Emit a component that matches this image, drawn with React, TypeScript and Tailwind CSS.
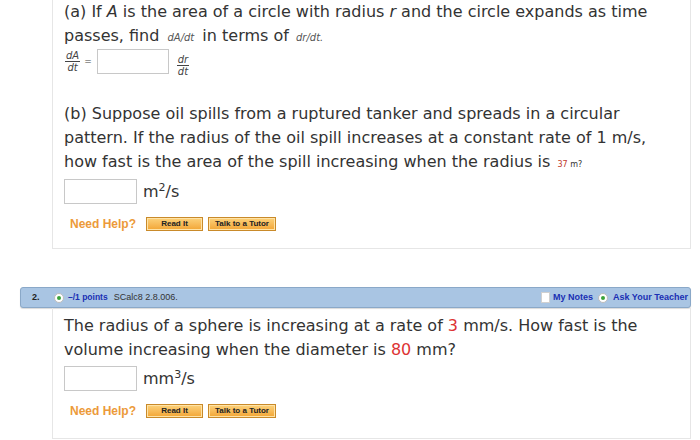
const body = "font-['DejaVu_Sans',Verdana,sans-serif] text-[16px] leading-[24px] text-[#333]";

const Btn = ({ label, w }: { label: string; w: string }) => (
  <span
    className={`${w} h-[14px] flex items-center justify-center border border-[#c98a2a] bg-gradient-to-b from-[#fcd27a] to-[#f2a531] font-['Liberation_Sans',Arial,sans-serif] text-[8px] font-bold text-[#222] shadow-[inset_0_0_0_1px_#ffe3a6]`}
  >
    {label}
  </span>
);

const HelpRow = () => (
  <div className="flex items-center ml-[6px]">
    <span className="font-['Liberation_Sans',Arial,sans-serif] text-[12px] font-bold text-[#ec9a3a] mr-[10px]">Need Help?</span>
    <Btn label="Read It" w="w-[57px]" />
    <span className="w-[5px]" />
    <Btn label="Talk to a Tutor" w="w-[68px]" />
  </div>
);

const AnswerBox = ({ w = "w-[73px]" }: { w?: string }) => (
  <span className={`${w} h-[25px] inline-block border border-[#c8c8c8] bg-white`} />
);

const Frac = ({ top, bottom }: { top: string; bottom: string }) => (
  <span className="inline-flex flex-col items-center font-['DejaVu_Sans',sans-serif] italic text-[10px] leading-[11px] text-[#444]">
    <span className="border-b border-[#444] px-[1px]">{top}</span>
    <span>{bottom}</span>
  </span>
);

const Dot = () => (
  <span className="w-[10px] h-[10px] rounded-full bg-white border border-[#bcbcbc] flex items-center justify-center">
    <span className="w-[4px] h-[4px] rounded-full bg-[#3aa33a]" />
  </span>
);

export default function App() {
  return (
    <div className="w-[700px] h-[440px] bg-white overflow-hidden">
      <div className={`ml-[52px] w-[639px] border-l border-r border-b border-[#e6e6e6] pl-[11px] pb-[12px] ${body}`}>
        <p>
          (a) If <i>A</i> is the area of a circle with radius <i>r</i> and the circle expands as time
        </p>
        <p>
          passes, find <span className="italic text-[10px] text-[#555] mx-[3px]">dA/dt</span> in terms of{" "}
          <span className="italic text-[10px] text-[#555] ml-[2px]">dr/dt.</span>
        </p>
        <div className="flex items-center -mt-[2px] ml-[1px] h-[26px]">
          <Frac top="dA" bottom="dt" />
          <span className="text-[9px] text-[#444] mx-[4px]">=</span>
          <span className="w-[72px] h-[25px] border border-[#c8c8c8] ml-[1px]" />
          <span className="ml-[8px]">
            <Frac top="dr" bottom="dt" />
          </span>
        </div>
        <div className="h-[28px]" />
        <p>(b) Suppose oil spills from a ruptured tanker and spreads in a circular</p>
        <p>pattern. If the radius of the oil spill increases at a constant rate of 1 m/s,</p>
        <p>
          how fast is the area of the spill increasing when the radius is{" "}
          <span className="text-[8px] ml-[2px]">
            <span className="text-[#c0392b]">37</span> m?
          </span>
        </p>
        <div className="flex items-center mt-[2px] gap-[6px]">
          <AnswerBox />
          <span>
            m<sup className="text-[11px] leading-none">2</sup>/s
          </span>
        </div>
        <div className="mt-[8px]">
          <HelpRow />
        </div>
      </div>

      <div className="h-[38px]" />

      <div className="ml-[20px] w-[671px] h-[21px] rounded-[3px] border border-[#8aa8c8] bg-[#a9c5e3] flex items-center font-['Liberation_Sans',Arial,sans-serif] text-[9px] shadow-[0_1px_1px_rgba(0,0,0,0.15)]">
        <span className="font-bold text-[#222] ml-[11px] w-[22px]">2.</span>
        <Dot />
        <span className="font-bold text-[#1a2fb3] ml-[4px] text-[8.5px]">–/1 points</span>
        <span className="text-[#333] ml-[6px]">SCalc8 2.8.006.</span>
        <span className="flex-1" />
        <span className="w-[9px] h-[11px] bg-white border border-[#d0d0d0] mr-[3px]" />
        <span className="font-bold text-[#1a2fb3]">My Notes</span>
        <span className="ml-[5px] mr-[5px]">
          <Dot />
        </span>
        <span className="font-bold text-[#1a2fb3] mr-[2px]">Ask Your Teacher</span>
      </div>

      <div className={`ml-[52px] w-[639px] border-l border-r border-b border-[#e6e6e6] pl-[11px] pt-[6px] pb-[15px] ${body}`}>
        <p>
          The radius of a sphere is increasing at a rate of <span className="text-[#d33]">3</span> mm/s. How fast is the
        </p>
        <p>
          volume increasing when the diameter is <span className="text-[#d33]">80</span> mm?
        </p>
        <div className="flex items-center mt-[4px] gap-[6px]">
          <AnswerBox />
          <span>
            mm<sup className="text-[11px] leading-none">3</sup>/s
          </span>
        </div>
        <div className="mt-[8px]">
          <HelpRow />
        </div>
      </div>
    </div>
  );
}
